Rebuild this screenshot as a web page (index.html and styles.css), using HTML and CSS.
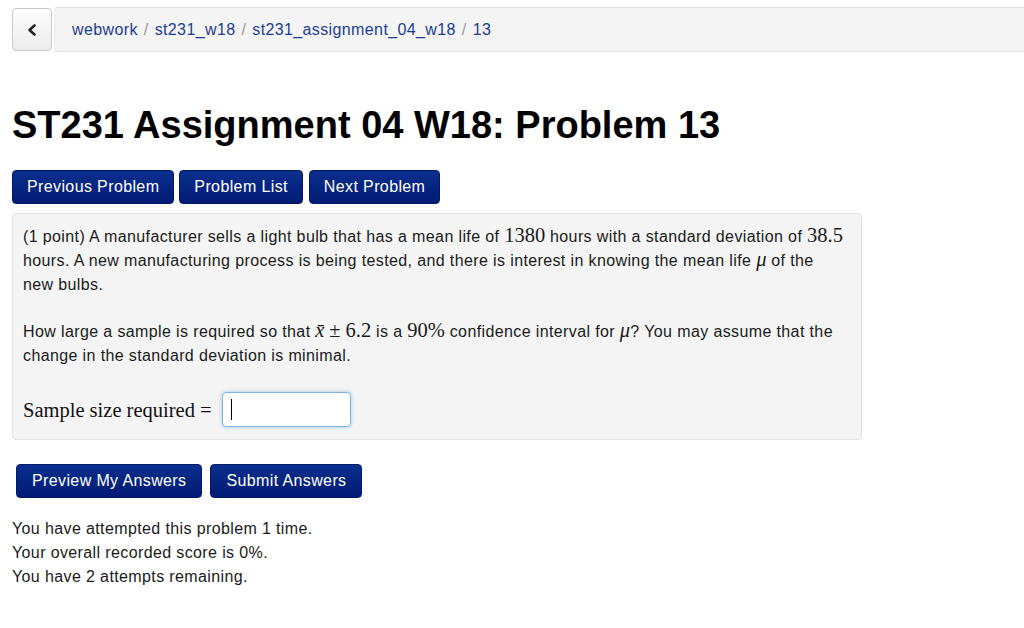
FILE: index.html
```html
<!DOCTYPE html>
<html>
<head>
<meta charset="utf-8">
<link rel="stylesheet" href="styles.css">
</head>
<body>
<div class="page">
  <div class="topbar">
    <div class="back-btn">
      <svg width="14" height="14" viewBox="0 0 14 14"><path d="M9.5 2.5 L4.5 7 L9.5 11.5" fill="none" stroke="#222" stroke-width="2.6" stroke-linecap="round" stroke-linejoin="round"/></svg>
    </div>
    <div class="crumbs">
      <a>webwork</a><span class="sep">/</span><a>st231_w18</a><span class="sep">/</span><a>st231_assignment_04_w18</a><span class="sep">/</span><a>13</a>
    </div>
  </div>

  <h1 class="title">ST231 Assignment 04 W18: Problem 13</h1>

  <div class="nav">
    <span class="btn">Previous Problem</span>
    <span class="btn">Problem List</span>
    <span class="btn">Next Problem</span>
  </div>

  <div class="problem">
    <p>(1 point) A manufacturer sells a light bulb that has a mean life of <span class="m">1380</span> hours with a standard deviation of <span class="m">38.5</span> hours. A new manufacturing process is being tested, and there is interest in knowing the mean life <span class="m i">μ</span> of the new bulbs.</p>
    <p>How large a sample is required so that <span class="m i">x̄</span> <span class="m">± 6.2</span> is a <span class="m">90%</span> confidence interval for <span class="m i">μ</span>? You may assume that the change in the standard deviation is minimal.</p>
    <div class="answer">
      <span class="label">Sample size required =</span>
      <span class="input"><span class="caret"></span></span>
    </div>
  </div>

  <div class="actions">
    <span class="btn">Preview My Answers</span>
    <span class="btn">Submit Answers</span>
  </div>

  <div class="status">
    <div>You have attempted this problem 1 time.</div>
    <div>Your overall recorded score is 0%.</div>
    <div>You have 2 attempts remaining.</div>
  </div>
</div>
</body>
</html>
```

FILE: styles.css
```css
html, body {
  margin: 0;
  padding: 0;
  background: #fff;
}
body {
  font-family: "Liberation Sans", Arial, sans-serif;
  font-size: 16px;
  letter-spacing: 0.38px;
  color: #1a1a1a;
  line-height: 24px;
}
.page {
  padding: 7px 0 0 12px;
}
.topbar {
  display: flex;
  align-items: stretch;
  height: 45px;
}
.back-btn {
  width: 38px;
  margin-top: 1px;
  height: 41px;
  border: 1px solid #c8c8c8;
  border-radius: 4px;
  background: linear-gradient(#fdfdfd, #ececec);
  display: flex;
  align-items: center;
  justify-content: center;
  box-sizing: content-box;
}
.crumbs {
  flex: 1;
  margin-left: 2px;
  background: #f4f4f4;
  border-top: 1px solid #e2e2e2;
  border-bottom: 1px solid #e2e2e2;
  border-left: 1px solid #e8e8e8;
  border-radius: 3px 0 0 3px;
  display: flex;
  align-items: center;
  padding-left: 17px;
  padding-top: 1px;
  color: #888;
}
.crumbs a {
  color: #1c3c96;
}
.crumbs .sep {
  color: #999;
  padding: 0 6px;
}
.title {
  font-size: 38px;
  font-weight: bold;
  letter-spacing: 0;
  line-height: 42px;
  margin: 52px 0 24px 0;
  color: #000;
}
.nav, .actions {
  display: flex;
  gap: 5px;
}
.btn {
  display: inline-block;
  height: 32px;
  line-height: 32px;
  padding: 0 14px;
  color: #fff;
  font-size: 16px;
  background: linear-gradient(#0c2f8e, #001b74);
  border: 1px solid #001a66;
  border-radius: 4px;
}
.nav .btn:nth-child(3) {
  margin-left: 1px;
}
.problem {
  margin-top: 9px;
  width: 822px;
  background: #f4f4f4;
  border: 1px solid #e1e1e1;
  border-radius: 4px;
  padding: 11px 16px 12px 10px;
}
.problem p {
  margin: 0 0 23px 0;
}
.m {
  font-family: "Liberation Serif", "Times New Roman", serif;
  font-size: 20.5px;
  line-height: 16px;
  letter-spacing: 0;
}
.i {
  font-style: italic;
}
.answer {
  margin-top: 24px;
  display: flex;
  align-items: center;
  gap: 10px;
  height: 35px;
}
.label {
  font-family: "Liberation Serif", "Times New Roman", serif;
  font-size: 20.5px;
  letter-spacing: 0;
  color: #111;
}
.input {
  background: #fff;
  border: 1px solid #7fb4e6;
  border-radius: 4px;
  box-shadow: 0 0 4px rgba(102, 175, 233, 0.6);
  display: flex;
  align-items: center;
  padding-left: 8px;
  box-sizing: border-box;
  width: 129px;
  height: 35px;
}
.caret {
  width: 1px;
  height: 21px;
  background: #000;
}
.actions {
  margin: 24px 0 0 4px;
  gap: 8px;
}
.actions .btn {
  padding: 0 15px;
}
.status {
  margin-top: 19px;
}
```
